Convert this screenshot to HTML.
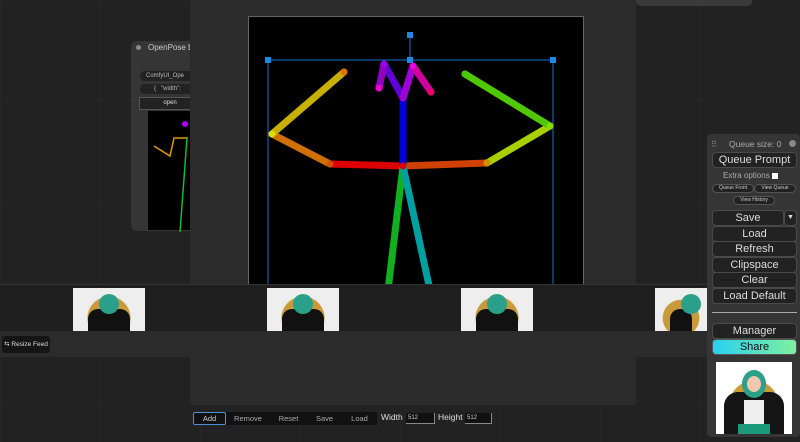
<!DOCTYPE html>
<html><head><style>
body{margin:0;width:800px;height:442px;overflow:hidden;background:#222;font-family:"Liberation Sans",sans-serif;position:relative}
.grid{position:absolute;inset:0;background-image:linear-gradient(#262626 1px,transparent 1px),linear-gradient(90deg,#262626 1px,transparent 1px);background-size:100px 100px}
.abs{position:absolute}
.btn{position:absolute;left:5px;width:83px;height:14px;background:#222;border:1px solid #4a4a4a;border-radius:4px;color:#ddd;font-size:11px;text-align:center;line-height:14px}
.sm{position:absolute;height:7px;border:1px solid #555;border-radius:5px;color:#ccc;font-size:5px;text-align:center;line-height:7px;background:#222}
.tb{position:absolute;top:412px;height:13px;background:#111;color:#aaa;font-size:7.5px;text-align:center;line-height:13px}
.img{position:absolute;top:288px;width:72px;height:43px;background:radial-gradient(circle at 50% 70%,#c99a3a 0 45%,#eee 47%);overflow:hidden}
.img:after{content:"";position:absolute;left:15px;right:15px;bottom:0;height:22px;background:#111;border-radius:10px 10px 0 0}
.img:before{content:"";position:absolute;left:26px;top:6px;width:20px;height:20px;background:#2aa08a;border-radius:50%;z-index:1}
</style></head><body>
<div class="grid"></div>
<div class="abs" style="left:636px;top:0;width:116px;height:6px;background:#3a3a3a;border-radius:0 0 5px 5px"></div>
<div class="abs" style="left:131px;top:41px;width:70px;height:190px;background:#353535;border-radius:6px"></div>
<div class="abs" style="left:136px;top:45px;width:5px;height:5px;border-radius:50%;background:#888"></div>
<div class="abs" style="left:148px;top:43px;color:#ccc;font-size:8px">OpenPose E</div>
<div class="abs" style="left:140px;top:71px;width:60px;height:10px;background:#222;border-radius:5px;color:#bbb;font-size:6px;line-height:10px;padding-left:6px">ComfyUI_Ope</div>
<div class="abs" style="left:140px;top:84px;width:60px;height:10px;background:#222;border-radius:5px;color:#bbb;font-size:6px;line-height:10px;padding-left:14px">{ &nbsp; "width":</div>
<div class="abs" style="left:139px;top:97px;width:60px;height:11px;background:#222;border:1px solid #555;color:#ddd;font-size:6px;line-height:11px;text-align:center">open</div>
<div class="abs" style="left:148px;top:111px;width:45px;height:119px;background:#000"></div>
<svg class="abs" style="left:0;top:0" width="800" height="442">
<g stroke-width="1.5" fill="none"><path d="M154,146 L170,156 L174,138 L188,138" stroke="#d90"/><path d="M187,138 L180,232" stroke="#1b3"/><circle cx="185" cy="124" r="3" fill="#a0f" stroke="none"/></g>
</svg>
<div class="abs" style="left:190px;top:0;width:446px;height:405px;background:#2b2b2b"></div>
<div class="abs" style="left:248px;top:16px;width:334px;height:270px;background:#000;border:1px solid #666"></div>
<svg class="abs" style="left:0;top:0" width="800" height="442">
<rect x="268" y="60" width="285" height="240" fill="none" stroke="#1e6fd0" stroke-width="1"/>
<line x1="410" y1="35" x2="410" y2="60" stroke="#1e6fd0"/>
<g fill="#1e88e5"><rect x="265" y="57" width="6" height="6"/><rect x="407" y="57" width="6" height="6"/><rect x="550" y="57" width="6" height="6"/><rect x="407" y="32" width="6" height="6"/></g>
<g stroke-width="7" stroke-linecap="round">
<line x1="403" y1="166" x2="330" y2="164" stroke="#d00"/>
<line x1="330" y1="164" x2="272" y2="134" stroke="#d07000"/>
<line x1="272" y1="134" x2="344" y2="72" stroke="#c8b000"/>
<line x1="403" y1="166" x2="487" y2="163" stroke="#d04000"/>
<line x1="487" y1="163" x2="550" y2="126" stroke="#a8d000"/>
<line x1="550" y1="126" x2="465" y2="74" stroke="#50c800"/>
<line x1="403" y1="166" x2="403" y2="98" stroke="#0000d8"/>
<line x1="403" y1="98" x2="384" y2="64" stroke="#6000d8"/>
<line x1="403" y1="98" x2="413" y2="66" stroke="#a000d8"/>
<line x1="384" y1="64" x2="379" y2="88" stroke="#9000c0"/>
<line x1="413" y1="66" x2="431" y2="92" stroke="#d000a0"/>
<line x1="403" y1="166" x2="388" y2="290" stroke="#10b020"/>
<line x1="403" y1="166" x2="430" y2="290" stroke="#00a0a0"/>
</g>
<g><circle cx="403" cy="166" r="3.5" fill="#d00"/><circle cx="330" cy="164" r="3.5" fill="#d05000"/><circle cx="272" cy="134" r="3.5" fill="#dd0"/><circle cx="344" cy="72" r="3.5" fill="#e07000"/><circle cx="487" cy="163" r="3.5" fill="#d09000"/><circle cx="550" cy="126" r="3.5" fill="#8d0"/><circle cx="465" cy="74" r="3.5" fill="#4c0"/><circle cx="379" cy="88" r="3.5" fill="#e0c"/><circle cx="431" cy="92" r="3.5" fill="#e06"/><circle cx="384" cy="64" r="3" fill="#90f"/><circle cx="413" cy="66" r="3" fill="#e0e"/></g>
</svg>
<div class="abs" style="left:0;top:284px;width:800px;height:47px;background:#1e1e1e;border-top:1px solid #333"></div>
<div class="img" style="left:73px"></div><div class="img" style="left:267px"></div><div class="img" style="left:461px"></div><div class="img" style="left:655px;width:52px"></div>
<div class="abs" style="left:0;top:331px;width:800px;height:26px;background:#2b2b2b"></div>
<div class="abs" style="left:2px;top:336px;width:48px;height:17px;background:#151515;border-radius:3px;color:#ddd;font-size:6.5px;line-height:17px;text-align:center">⇆ Resize Feed</div>
<div class="tb" style="left:193px;width:31px;border:1px solid #4a90d9;border-radius:2px;height:11px;line-height:11px;color:#ccc">Add</div>
<div class="tb" style="left:226px;width:44px">Remove</div>
<div class="tb" style="left:270px;width:37px">Reset</div>
<div class="tb" style="left:307px;width:35px">Save</div>
<div class="tb" style="left:342px;width:35px">Load</div>
<div class="abs" style="left:381px;top:412px;color:#ddd;font-size:8.5px">Width</div>
<div class="abs" style="left:406px;top:413px;width:26px;height:10px;background:#111;border-right:1px solid #888;border-bottom:1px solid #888;color:#ccc;font-size:6px;line-height:10px;padding-left:2px">512</div>
<div class="abs" style="left:438px;top:412px;color:#ddd;font-size:8.5px">Height</div>
<div class="abs" style="left:465px;top:413px;width:24px;height:10px;background:#111;border-right:1px solid #888;border-bottom:1px solid #888;color:#ccc;font-size:6px;line-height:10px;padding-left:2px">512</div>
<div class="abs" style="left:707px;top:134px;width:93px;height:303px;background:#353535;border-radius:4px">
<div class="abs" style="left:4px;top:6px;color:#888;font-size:8px">⠿</div>
<div class="abs" style="left:22px;top:5px;color:#aaa;font-size:8.5px">Queue size: 0</div>
<div class="abs" style="left:82px;top:6px;width:7px;height:7px;border-radius:50%;background:#888"></div>
<div class="btn" style="top:18px">Queue Prompt</div>
<div class="abs" style="left:16px;top:37px;color:#aaa;font-size:8px">Extra options <span style="display:inline-block;width:6px;height:6px;background:#fff;vertical-align:middle"></span></div>
<div class="sm" style="left:5px;top:50px;width:40px">Queue Front</div>
<div class="sm" style="left:47px;top:50px;width:40px">View Queue</div>
<div class="sm" style="left:26px;top:62px;width:40px">View History</div>
<div class="btn" style="top:76px;width:70px">Save</div>
<div class="btn" style="top:76px;left:77px;width:11px;font-size:7px">▼</div>
<div class="btn" style="top:92px">Load</div>
<div class="btn" style="top:107px">Refresh</div>
<div class="btn" style="top:123px">Clipspace</div>
<div class="btn" style="top:138px">Clear</div>
<div class="btn" style="top:154px">Load Default</div>
<div class="abs" style="left:5px;top:178px;width:85px;height:1px;background:#aaa"></div>
<div class="btn" style="top:189px">Manager</div>
<div class="btn" style="top:205px;background:linear-gradient(90deg,#2ad0f0,#80f0a0);color:#111;border-color:#555">Share</div>
<div class="abs" style="left:9px;top:228px;width:76px;height:72px;background:radial-gradient(circle at 50% 60%,#c99a3a 0 42%,#fff 44%);overflow:hidden">
<div class="abs" style="left:8px;top:30px;width:60px;height:42px;background:#151515;border-radius:14px 14px 0 0"></div>
<div class="abs" style="left:28px;top:38px;width:20px;height:34px;background:#eee"></div>
<div class="abs" style="left:26px;top:8px;width:24px;height:28px;background:#2aa08a;border-radius:50%"></div>
<div class="abs" style="left:31px;top:14px;width:14px;height:16px;background:#f0c8b0;border-radius:50%"></div>
<div class="abs" style="left:22px;top:62px;width:32px;height:10px;background:#1a9a7a"></div>
</div>
</div>
</body></html>
